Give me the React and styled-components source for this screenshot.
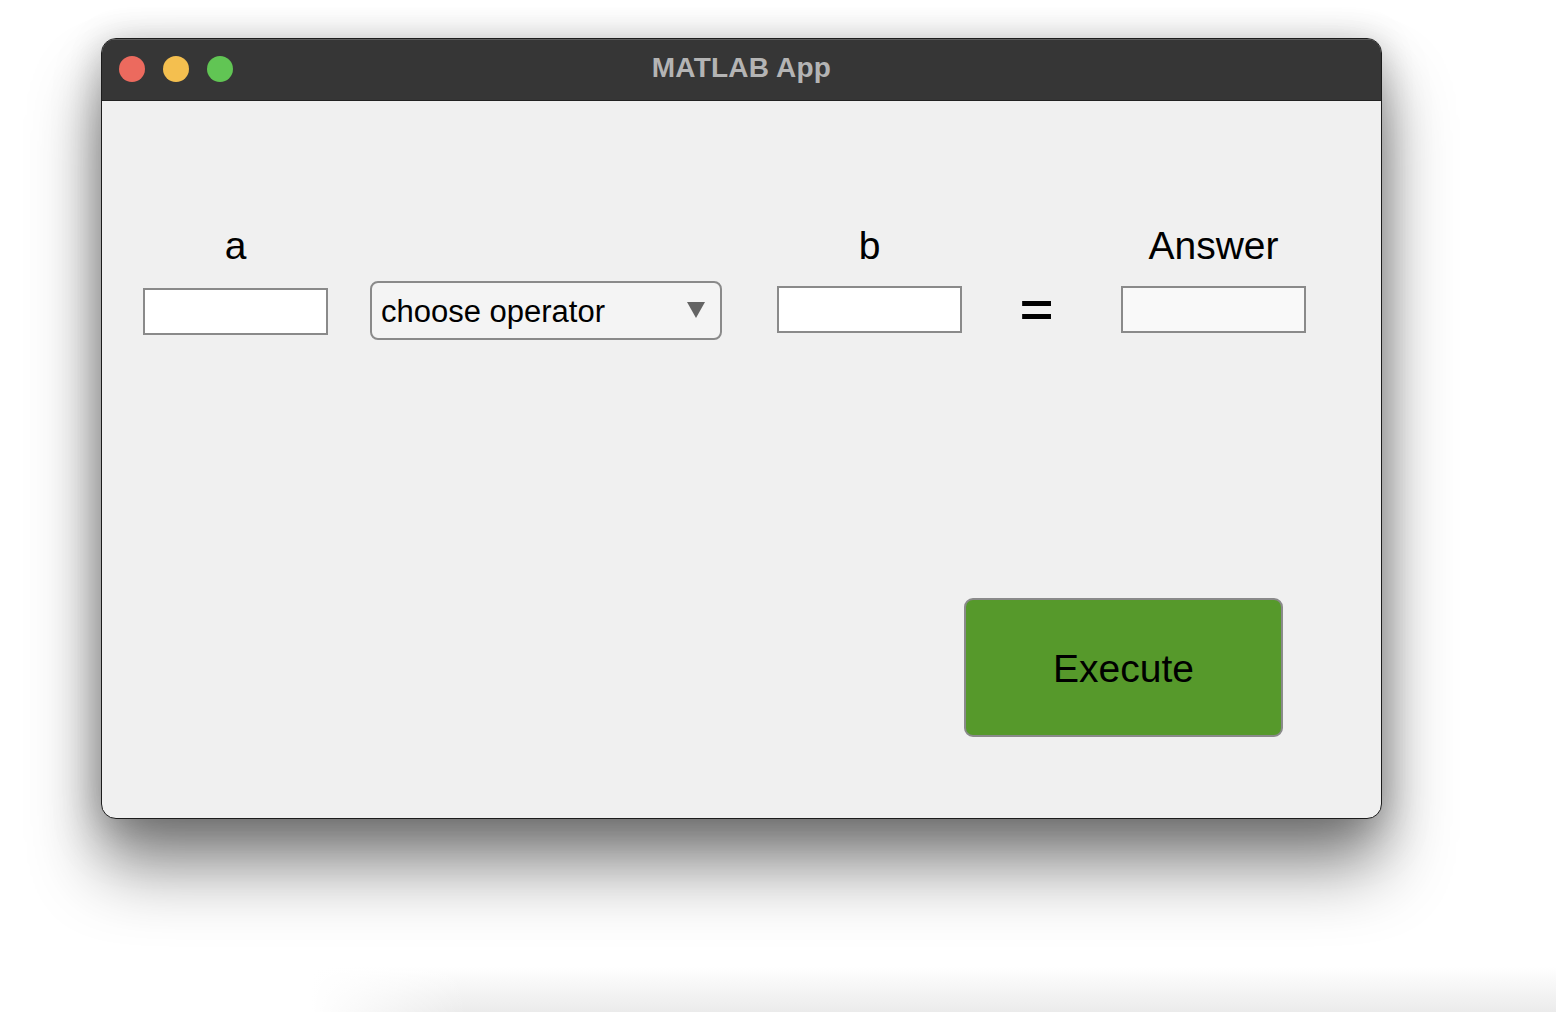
import React from "react";
import styled, { createGlobalStyle } from "styled-components";

const Global = createGlobalStyle`
  html, body { margin: 0; padding: 0; background: #ffffff; }
  body { font-family: "Liberation Sans", Arial, Helvetica, sans-serif; }
  * { box-sizing: border-box; }
`;

const Page = styled.div`
  width: 1556px;
  height: 1012px;
  padding: 38px 0 0 101px;
  overflow: hidden;
  background: linear-gradient(90deg, #ffffff 20%, rgba(255, 255, 255, 0) 30%),
    linear-gradient(180deg, #ffffff 0%, #ffffff 95.5%, #ebebeb 100%);
`;

const Window = styled.div`
  width: 1281px;
  height: 781px;
  border-radius: 15px;
  border: 1px solid #1c1c1c;
  background: #f0f0f0;
  overflow: hidden;
  display: flex;
  flex-direction: column;
  box-shadow: 0 50px 70px rgba(0, 0, 0, 0.42), 0 20px 50px rgba(0, 0, 0, 0.22),
    0 0 34px rgba(0, 0, 0, 0.14);
`;

const TitleBar = styled.div`
  position: relative;
  height: 62px;
  flex: none;
  background: #363636;
  border-top: 1px solid #5e5e5e;
  border-bottom: 1px solid #222;
  display: flex;
  align-items: center;
  padding: 0 0 2px 17px;
  gap: 18px;
`;

const Light = styled.span`
  width: 26px;
  height: 26px;
  border-radius: 50%;
  background: ${(p) => p.$c};
`;

const Title = styled.div`
  position: absolute;
  left: 0;
  right: 0;
  top: 0;
  bottom: 0;
  display: flex;
  align-items: center;
  justify-content: center;
  padding-bottom: 4px;
  color: #b4b4b4;
  font-weight: 700;
  font-size: 28px;
  letter-spacing: 0.2px;
  pointer-events: none;
`;

const Body = styled.div`
  flex: 1;
  display: flex;
  flex-direction: column;
  padding: 123px 0 0 41px;
`;

const FormRow = styled.div`
  display: flex;
  align-items: flex-start;
`;

const Field = styled.div`
  display: flex;
  flex-direction: column;
  align-items: center;
  width: ${(p) => p.$w}px;
  margin-left: ${(p) => p.$ml || 0}px;
`;

const Label = styled.div`
  height: 44px;
  line-height: 44px;
  font-size: 39px;
  color: #000;
  margin-bottom: 12px;
`;

const ControlSlot = styled.div`
  height: 60px;
  width: 100%;
  display: flex;
  align-items: center;
  justify-content: center;
`;

const TextBox = styled.div`
  width: 185px;
  height: 47px;
  border: 2px solid #8a8a8a;
  background: ${(p) => (p.$readonly ? "#f9f9f9" : "#ffffff")};
  margin-top: ${(p) => p.$dy || 0}px;
`;

const Dropdown = styled.div`
  width: 352px;
  height: 59px;
  border: 2px solid #8a8a8a;
  border-radius: 8px;
  background: #f4f4f4;
  display: flex;
  align-items: center;
  justify-content: space-between;
  padding: 3px 14px 0 9px;
  font-size: 31px;
  color: #000;
`;

const Caret = styled.svg`
  width: 20px;
  height: 18px;
  flex: none;
  margin-top: -3px;
`;

const Equals = styled.div`
  font-size: 46px;
  font-weight: 700;
  line-height: 1;
  color: #000;
  transform: translate(-5px, 0px) scaleX(1.25);
`;

const ButtonRow = styled.div`
  display: flex;
  justify-content: flex-end;
  padding-right: 98px;
  margin-top: 258px;
`;

const ExecuteButton = styled.button`
  width: 319px;
  height: 139px;
  border: 2px solid #8a8a8a;
  border-radius: 9px;
  background: #56992b;
  color: #000;
  font-family: "Liberation Sans", Arial, Helvetica, sans-serif;
  font-size: 39px;
  padding: 2px 0 0;
  cursor: pointer;
`;

export default function App() {
  return (
    <>
      <Global />
      <Page>
        <Window>
          <TitleBar>
            <Light $c="#ec6a5e" />
            <Light $c="#f4bf4f" />
            <Light $c="#61c554" />
            <Title>MATLAB App</Title>
          </TitleBar>
          <Body>
            <FormRow>
              <Field $w={185}>
                <Label>a</Label>
                <ControlSlot>
                  <TextBox $dy={2} />
                </ControlSlot>
              </Field>
              <Field $w={352} $ml={42}>
                <Label />
                <ControlSlot>
                  <Dropdown>
                    <span>choose operator</span>
                    <Caret viewBox="0 0 20 18">
                      <polygon points="1,1 19,1 10,17" fill="#646464" />
                    </Caret>
                  </Dropdown>
                </ControlSlot>
              </Field>
              <Field $w={185} $ml={55}>
                <Label>b</Label>
                <ControlSlot>
                  <TextBox $dy={-2} />
                </ControlSlot>
              </Field>
              <Field $w={159}>
                <Label />
                <ControlSlot>
                  <Equals>=</Equals>
                </ControlSlot>
              </Field>
              <Field $w={185}>
                <Label>Answer</Label>
                <ControlSlot>
                  <TextBox $readonly $dy={-2} />
                </ControlSlot>
              </Field>
            </FormRow>
            <ButtonRow>
              <ExecuteButton>Execute</ExecuteButton>
            </ButtonRow>
          </Body>
        </Window>
      </Page>
    </>
  );
}
